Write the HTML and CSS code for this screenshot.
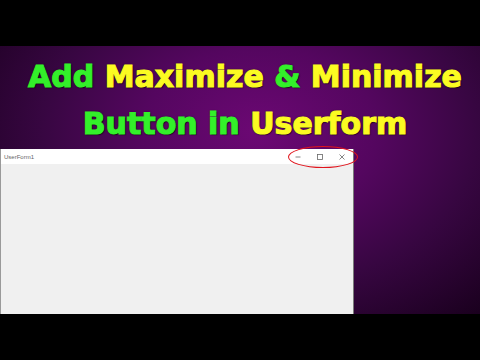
FILE: index.html
```html
<!DOCTYPE html>
<html>
<head>
<meta charset="utf-8">
<link rel="stylesheet" href="styles.css">
</head>
<body>
<div class="bar"></div>
<div class="stage">
  <div class="headline">
    <div class="line"><span class="g">Add</span> <span class="y">Maximize</span> <span class="g">&amp;</span> <span class="y">Minimize</span></div>
    <div class="line"><span class="g">Button in</span> <span class="y">Userform</span></div>
  </div>
  <div class="window">
    <div class="titlebar">
      <span class="title">UserForm1</span>
      <div class="controls">
        <span class="ctl"><svg width="6" height="6" viewBox="0 0 6 6"><path d="M0.5 3h5" stroke="#666" stroke-width="0.8"/></svg></span>
        <span class="ctl"><svg width="6" height="6" viewBox="0 0 6 6"><rect x="0.5" y="0.5" width="5" height="5" fill="none" stroke="#666" stroke-width="0.8"/></svg></span>
        <span class="ctl"><svg width="6" height="6" viewBox="0 0 6 6"><path d="M0.5 0.5l5 5M5.5 0.5l-5 5" stroke="#666" stroke-width="0.8"/></svg></span>
      </div>
    </div>
    <div class="client"></div>
    <div class="ring"></div>
  </div>
</div>
<div class="bar"></div>
</body>
</html>
```
FILE: styles.css
```css
html, body {
  margin: 0;
  padding: 0;
  background: #000;
  width: 480px;
  height: 360px;
  overflow: hidden;
}
.bar {
  height: 46px;
  background: #000;
}
.stage {
  height: 268px;
  background: radial-gradient(ellipse 70% 90% at 54% 32%, #6c0874 0%, #54065f 35%, #370641 65%, #1a001e 100%);
  display: flex;
  flex-direction: column;
}
.headline {
  padding-top: 7px;
  padding-left: 10px;
  font-family: "DejaVu Sans", sans-serif;
  font-weight: bold;
  font-size: 30px;
  line-height: 47px;
  text-align: center;
  -webkit-text-stroke: 1.1px currentColor;
  text-shadow: 1px 1px 1px rgba(0,0,0,0.85), 0 0 2px rgba(0,0,0,0.7);
  white-space: nowrap;
}
.g { color: #33f02a; }
.y { color: #fbfb22; }
.window {
  position: relative;
  margin-top: 2px;
  width: 352px;
  flex: 1;
  display: flex;
  flex-direction: column;
  border-left: 1px solid #9a9a9a;
  border-right: 1px solid #7a7a7a;
}
.titlebar {
  height: 15px;
  background: #fff;
  display: flex;
  align-items: center;
  justify-content: space-between;
}
.title {
  font-family: "Liberation Sans", sans-serif;
  font-size: 6px;
  color: #666;
  padding-left: 3px;
}
.controls {
  display: flex;
  height: 100%;
}
.ctl {
  width: 22px;
  display: flex;
  align-items: center;
  justify-content: center;
}
.client {
  flex: 1;
  background: #f0f0f0;
}
.ring {
  position: absolute;
  left: 287px;
  top: -3px;
  width: 68px;
  height: 20px;
  border: 1.5px solid #e0141c;
  border-radius: 50%;
}
```
